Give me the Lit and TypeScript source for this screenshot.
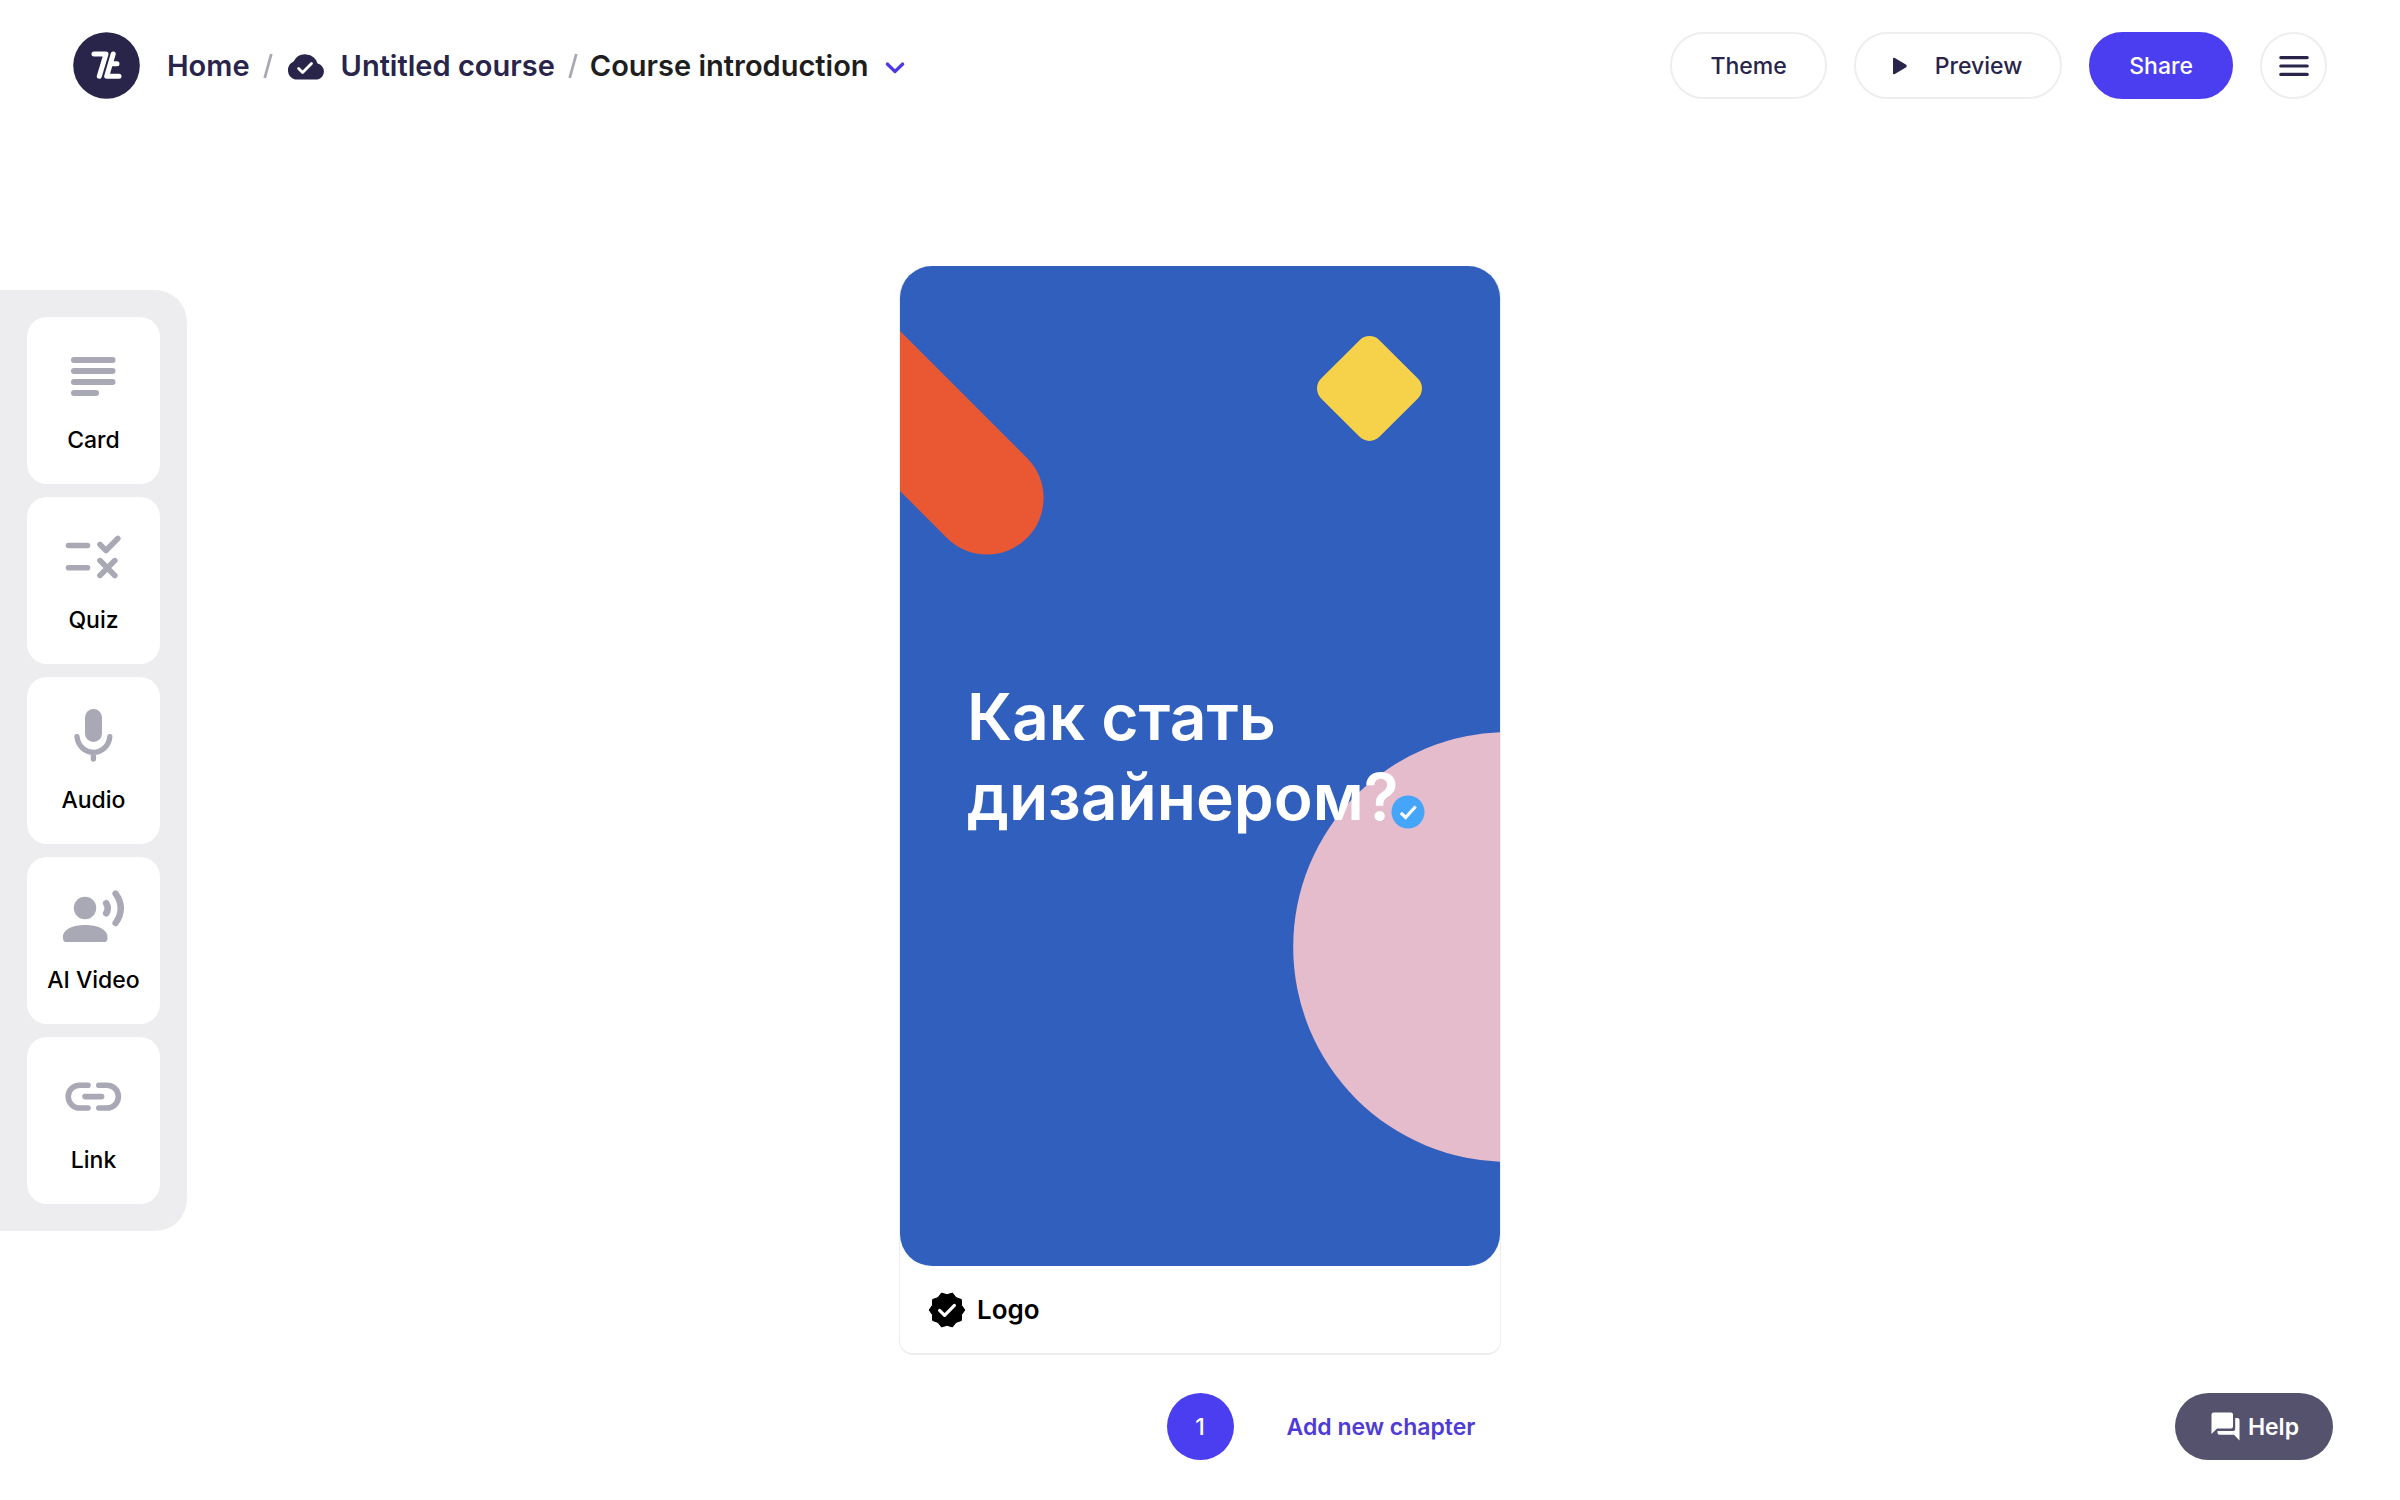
import { LitElement, html, css, svg } from "lit";
import { customElement, property } from "lit/decorators.js";

const toolIcons: Record<string, unknown> = {
  card: svg`<g fill="none" stroke="currentColor" stroke-width="6" stroke-linecap="round"><path d="M17 20H55.5M17 31H55.5M17 42H55.5M17 53H39"/></g>`,
  quiz: svg`<g fill="none" stroke="currentColor" stroke-width="5.6" stroke-linecap="round" stroke-linejoin="round"><path d="M11.5 25.5H30.5M11.5 47.7H30.5M43 24.5L49 30.5L60.8 18.5M43 40.6L57.8 55.4M57.8 40.6L43 55.4"/></g>`,
  audio: svg`<rect x="28" y="9" width="17" height="33" rx="8.5" fill="currentColor"/><g fill="none" stroke="currentColor" stroke-width="5.3" stroke-linecap="round"><path d="M20 36.7C21 46 28 52.3 36.4 52.3S52 46 52.8 36.7M36.4 53V59"/></g>`,
  video: svg`<circle cx="28" cy="28" r="11.2" fill="currentColor"/><path d="M6 58C5 49.5 16 45 28.2 45S51.5 49.5 50.5 58Q50.5 62 47.5 62H9Q6 62 6 58Z" fill="currentColor"/><g fill="none" stroke="currentColor" stroke-linecap="round"><path stroke-width="6.6" d="M49.2 23.3Q52.3 28.3 49.2 33.3"/><path stroke-width="6.4" d="M58.6 13.6Q69 28.3 58.6 43"/></g>`,
  link: svg`<g fill="none" stroke="currentColor" stroke-width="5.6" stroke-linecap="round"><path d="M31 25.2H22.6A11.4 11.4 0 0 0 22.6 48H31M41.8 25.2H50A11.4 11.4 0 0 1 50 48H41.8M28 36.6H44.6"/></g>`,
};

@customElement("tool-button")
class ToolButton extends LitElement {
  @property() label = "";
  @property() icon = "card";

  static styles = css`
    :host { display: block; }
    .tool {
      display: flex;
      flex-direction: column;
      align-items: center;
      gap: 12px;
      width: 100%;
      padding: 23px 0 28px;
      border: 0;
      border-radius: 20px;
      background: #fff;
      color: #000;
      font: 500 23px/32px Inter, "Liberation Sans", sans-serif;
      white-space: nowrap;
      cursor: pointer;
    }
    .icon { width: 72px; height: 72px; color: #a9a8b5; }
  `;

  render() {
    return html`<button class="tool" type="button">
      <svg class="icon" viewBox="1 0 72 72" aria-hidden="true">${toolIcons[this.icon]}</svg>
      <span>${this.label}</span>
    </button>`;
  }
}

const tools = [
  { label: "Card", icon: "card" },
  { label: "Quiz", icon: "quiz" },
  { label: "Audio", icon: "audio" },
  { label: "AI Video", icon: "video" },
  { label: "Link", icon: "link" },
];

/* Ten-pointed seal outline centred on 18,18. */
const seal = Array.from({ length: 20 }, (_, i) => {
  const r = i % 2 ? 15.3 : 17.8;
  const a = (i * Math.PI) / 10;
  return `${(18 + r * Math.cos(a)).toFixed(2)},${(18 + r * Math.sin(a)).toFixed(2)}`;
}).join(" ");

@customElement("app-root")
class AppRoot extends LitElement {
  static styles = css`
    :host {
      display: flex;
      flex-direction: column;
      box-sizing: border-box;
      min-height: 100vh;
      padding-bottom: 40px;
      background: #fff;
      color: #28244a;
      font: 500 23px/32px Inter, "Liberation Sans", sans-serif;
    }
    button { font: inherit; cursor: pointer; }
    svg { display: block; flex: none; }
    .top {
      display: flex;
      align-items: center;
      justify-content: space-between;
      padding: 32px 73px 0;
    }
    .crumbs {
      display: flex;
      align-items: center;
      font-size: 29px;
      line-height: 36px;
      font-weight: 600;
      white-space: nowrap;
    }
    .crumbs a { color: inherit; text-decoration: none; }
    .home-mark { margin-right: 27px; border-radius: 50%; }
    .slash { margin: 0 12px 0 13px; }
    .course { display: flex; align-items: center; gap: 15px; }
    .current {
      display: flex;
      align-items: center;
      gap: 15px;
      padding: 0;
      border: 0;
      background: none;
      color: #1e1e1e;
    }
    .actions { display: flex; gap: 27px; }
    .pill {
      display: flex;
      align-items: center;
      justify-content: center;
      box-sizing: border-box;
      height: 67px;
      padding: 0 38px;
      border: 2px solid #eeeef0;
      border-radius: 34px;
      background: #fff;
      color: #28244a;
    }
    .play { gap: 27px; padding: 0 38px 0 36px; }
    .share { border-color: #4b3df0; background: #4b3df0; color: #fff; }
    .menu { width: 67px; padding: 0; }
    .stage {
      display: grid;
      grid-template-columns: minmax(0, 1fr) 602px minmax(0, 1fr);
      align-items: start;
      padding-top: 167px;
    }
    .tools {
      display: grid;
      gap: 13px;
      width: 133px;
      margin-top: 24px;
      padding: 27px;
      border-radius: 0 32px 32px 0;
      background: #ededef;
    }
    .frame {
      border: solid #eeeef0;
      border-width: 0 1px 2px;
      border-radius: 32px 32px 14px 14px;
    }
    .cover {
      display: grid;
      border-radius: 32px;
      overflow: hidden;
    }
    .art, .title { grid-area: 1 / 1; }
    .art { width: 100%; height: auto; }
    .title {
      display: flex;
      align-items: flex-end;
      margin: 411px 0 0 67px;
      align-self: start;
      color: #fff;
      font-size: 64px;
      line-height: 80px;
      font-weight: 600;
      white-space: nowrap;
    }
    .tick { margin: 0 0 8px -8px; }
    .brand {
      display: flex;
      align-items: center;
      gap: 11px;
      height: 87px;
      padding: 0 28px;
      color: #000;
      font-size: 26px;
      font-weight: 600;
    }
    .bottom {
      display: grid;
      grid-template-columns: minmax(0, 1fr) auto minmax(0, 1fr);
      align-items: center;
      margin-top: 38px;
    }
    .chapter {
      grid-column: 2;
      width: 67px;
      height: 67px;
      padding: 0;
      border: 0;
      border-radius: 50%;
      background: #4b3df0;
      color: #fff;
    }
    .trail {
      display: flex;
      align-items: center;
      justify-content: space-between;
      padding: 0 67px 0 53px;
    }
    .add {
      padding: 0;
      border: 0;
      background: none;
      color: #4f3bd6;
      font-weight: 600;
    }
    .help {
      display: flex;
      align-items: center;
      gap: 8px;
      height: 67px;
      padding: 0 34px 0 36px;
      border: 0;
      border-radius: 34px;
      background: #54526c;
      color: #fff;
      font-weight: 600;
    }
  `;

  private slash() {
    return html`<svg class="slash" width="10" height="28" viewBox="0 0 10 28" aria-hidden="true"><path d="M8.3 2L1.7 26" stroke="#a9a8b2" stroke-width="2.8" fill="none"/></svg>`;
  }

  render() {
    return html`
      <header class="top">
        <nav class="crumbs" aria-label="Breadcrumb">
          <a class="home-mark" href="#" aria-label="Dashboard">
            <svg width="67" height="67" viewBox="0 0 67 67">
              <circle cx="33.5" cy="33.5" r="33.3" fill="#28244a"/>
              <g fill="none" stroke="#fff" stroke-width="5" stroke-linecap="round" stroke-linejoin="round">
                <path d="M21 22H33L26.3 44.2"/>
                <path d="M40.2 22L33.7 44.2H46M38.2 31.8H44"/>
              </g>
            </svg>
          </a>
          <a href="#">Home</a>
          ${this.slash()}
          <a class="course" href="#">
            <svg width="41" height="28" viewBox="0 0 41 28" aria-hidden="true">
              <path d="M10 27.5A9.6 9.6 0 0 1 8.6 9.5A13 13 0 0 1 32.6 11.5A8.2 8.2 0 0 1 32.5 27.5Z" fill="#28244a"/>
              <path d="M13.6 16.5L17.6 20.5L26.5 11.5" fill="none" stroke="#fff" stroke-width="2.8" stroke-linecap="round" stroke-linejoin="round"/>
            </svg>
            <span>Untitled course</span>
          </a>
          ${this.slash()}
          <button class="current" type="button">
            <span>Course introduction</span>
            <svg width="22" height="16" viewBox="0 0 22 16" aria-hidden="true"><path d="M3.3 6L11 13.5L18.7 6" fill="none" stroke="#5038e0" stroke-width="3.2" stroke-linecap="round" stroke-linejoin="round"/></svg>
          </button>
        </nav>
        <div class="actions">
          <button class="pill" type="button">Theme</button>
          <button class="pill play" type="button">
            <svg width="16" height="18" viewBox="0 0 16 18" aria-hidden="true"><path d="M1 2Q1 0 2.8 1L14.2 7.8Q15.6 9 14.2 10.2L2.8 17Q1 18 1 16Z" fill="#28244a"/></svg>
            <span>Preview</span>
          </button>
          <button class="pill share" type="button">Share</button>
          <button class="pill menu" type="button" aria-label="Menu">
            <svg width="30" height="22" viewBox="0 0 30 22" aria-hidden="true"><path d="M1.8 2.6H28.2M1.8 11H28.2M1.8 19.4H28.2" stroke="#28244a" stroke-width="3.2" stroke-linecap="round"/></svg>
          </button>
        </div>
      </header>

      <main class="stage">
        <aside class="tools">
          ${tools.map((t) => html`<tool-button .label=${t.label} .icon=${t.icon}></tool-button>`)}
        </aside>
        <section class="frame">
          <div class="cover">
            <svg class="art" viewBox="0 0 600 1000" aria-hidden="true">
              <rect width="600" height="1000" fill="#315fbe"/>
              <path d="M-113 32L87 232" fill="none" stroke="#ea5733" stroke-width="113.2" stroke-linecap="round"/>
              <rect x="-41.2" y="-41.2" width="82.4" height="82.4" rx="14" transform="translate(469.5 122.5) rotate(45)" fill="#f6d24b"/>
              <circle cx="608" cy="681" r="214.8" fill="#e4bccc"/>
            </svg>
            <h1 class="title">
              <span>Как стать<br />дизайнером?</span>
              <svg class="tick" width="34" height="34" viewBox="0 0 34 34" aria-hidden="true">
                <circle cx="17" cy="17" r="16.5" fill="#45a5f8"/>
                <path d="M9.8 17.8L14.6 22.5L24.6 11.5" fill="none" stroke="#fff" stroke-width="3.2"/>
              </svg>
            </h1>
          </div>
          <div class="brand">
            <svg width="38" height="38" viewBox="-1 -1 38 38" aria-hidden="true">
              <polygon points=${seal} fill="#000" stroke="#000" stroke-width="1" stroke-linejoin="round"/>
              <path d="M10.6 18.4L15.6 23.4L25.4 13.4" fill="none" stroke="#fff" stroke-width="3.2" stroke-linecap="round" stroke-linejoin="round"/>
            </svg>
            <span>Logo</span>
          </div>
        </section>
      </main>

      <footer class="bottom">
        <button class="chapter" type="button">1</button>
        <div class="trail">
          <button class="add" type="button">Add new chapter</button>
          <button class="help" type="button">
            <svg width="29" height="29" viewBox="0 0 29 29" aria-hidden="true">
              <path d="M2.5 .5H20Q22 .5 22 2.5V14.5Q22 16.5 20 16.5H6L.5 22V2.5Q.5 .5 2.5 .5Z" fill="#fff"/>
              <path d="M24.2 6H26.5Q28.5 6 28.5 8V28.5L23 22.8H8.5Q6.5 22.8 6.5 20.8V18.9H22.2Q24.2 18.9 24.2 16.9Z" fill="#fff"/>
            </svg>
            <span>Help</span>
          </button>
        </div>
      </footer>
    `;
  }
}
